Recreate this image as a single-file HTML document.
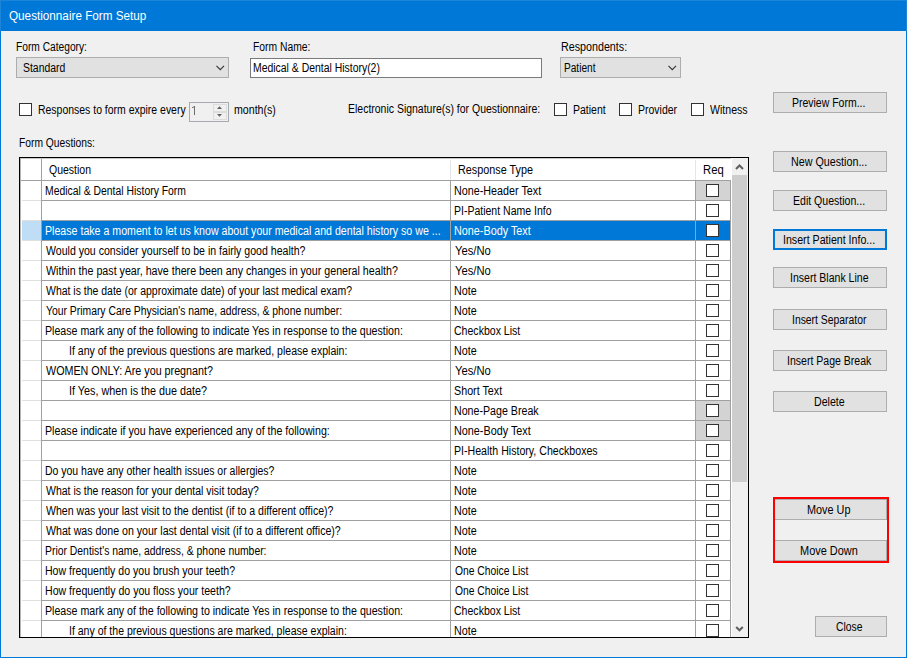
<!DOCTYPE html>
<html><head><meta charset="utf-8"><style>
*{margin:0;padding:0;box-sizing:border-box}
html,body{width:907px;height:658px;overflow:hidden;background:#F0F0F0}
body{position:relative;font-family:"Liberation Sans",sans-serif;font-size:12px;color:#000}
.a{position:absolute}
.t{position:absolute;font-size:12px;line-height:14px;white-space:nowrap;transform-origin:0 0;z-index:5}
.btn{position:absolute;left:773px;width:114px;height:21px;border:1px solid #ADADAD;background:#E1E1E1}
.cb{position:absolute;width:13px;height:13px;border:1px solid #333;background:#fff;z-index:3}
.hl{position:absolute;height:1px;background:#A0A0A0;z-index:2}
.vl{position:absolute;width:1px;background:#A0A0A0;z-index:2}
</style></head><body>

<div class="a" style="left:0;top:0;width:907px;height:31px;background:#0078D7"></div>
<div class="a" style="left:0;top:0;width:1px;height:658px;background:#0078D7"></div>
<div class="a" style="left:906px;top:0;width:1px;height:658px;background:#0078D7"></div>
<div class="a" style="left:0;top:657px;width:907px;height:1px;background:#0078D7"></div>
<div class="a" style="left:0;top:0;width:907px;height:1px;background:#1C85D9"></div>
<div class="a" style="left:0;top:0;width:1px;height:31px;background:#1C85D9"></div>
<div class="a" style="left:906px;top:0;width:1px;height:31px;background:#1C85D9"></div>
<div class="a" style="left:16px;top:57px;width:213px;height:21px;border:1px solid #ADADAD;background:#E1E1E1"></div>
<svg class="a" style="left:215px;top:63px" width="12" height="8" viewBox="0 0 12 8"><path d="M1.5 2.8 L5.25 6.6 L9 2.8" fill="none" stroke="#333" stroke-width="1.1"/></svg>
<div class="a" style="left:250px;top:58px;width:292px;height:20px;border:1px solid #7A7A7A;background:#fff"></div>
<div class="a" style="left:560px;top:57px;width:121px;height:21px;border:1px solid #ADADAD;background:#E1E1E1"></div>
<svg class="a" style="left:667px;top:63px" width="12" height="8" viewBox="0 0 12 8"><path d="M1.5 2.8 L5.25 6.6 L9 2.8" fill="none" stroke="#333" stroke-width="1.1"/></svg>
<div class="cb" style="left:19px;top:103px"></div>
<div class="a" style="left:189px;top:102px;width:40px;height:20px;border:1px solid #A6A9AF;background:#F0F0F0"></div>
<svg class="a" style="left:189px;top:102px;z-index:3" width="12" height="18" viewBox="0 0 12 18"><path d="M5.5 4 V13" stroke="#6D6D6D" stroke-width="1" fill="none"/><path d="M5.3 4.5 L3 5.9" stroke="#6D6D6D" stroke-width="1" fill="none"/></svg>
<div class="a" style="left:213px;top:104px;width:14px;height:8px;background:#F0F0F0;border:1px solid #DCDCDC"></div>
<div class="a" style="left:213px;top:112px;width:14px;height:8px;background:#F0F0F0;border:1px solid #DCDCDC"></div>
<svg class="a" style="left:213px;top:104px" width="14" height="16" viewBox="0 0 14 16"><path d="M4 5 L6.5 2.2 L9 5 Z" fill="#606060"/><path d="M4 10 L6.5 12.8 L9 10 Z" fill="#606060"/></svg>
<div class="cb" style="left:554px;top:103px"></div>
<div class="cb" style="left:619px;top:103px"></div>
<div class="cb" style="left:691px;top:103px"></div>
<div class="btn" style="top:92px;"></div>
<div class="btn" style="top:151px;"></div>
<div class="btn" style="top:190px;"></div>
<div class="btn" style="top:229px;border:2px solid #0078D7"></div>
<div class="btn" style="top:267px;"></div>
<div class="btn" style="top:309px;"></div>
<div class="btn" style="top:350px;"></div>
<div class="btn" style="top:391px;"></div>
<div class="btn" style="top:499px;"></div>
<div class="btn" style="top:540px;"></div>
<div class="a" style="left:773px;top:497px;width:116px;height:66px;border:2px solid #FF0000;z-index:4"></div>
<div class="btn" style="top:616px;left:815px;width:72px"></div>
<div class="a" style="left:19px;top:157px;width:730px;height:481px;border:1px solid #000;background:#fff"></div>
<div class="a" style="left:20px;top:158px;width:711px;height:1px;background:#C8C8C8;z-index:2"></div>
<div class="a" style="left:20px;top:158px;width:1px;height:479px;background:#B4B4B4;z-index:2"></div>
<div class="vl" style="left:41px;top:159px;height:478px"></div>
<div class="a" style="left:450px;top:160px;width:1px;height:20px;background:#E5E5E5"></div>
<div class="a" style="left:695px;top:160px;width:1px;height:20px;background:#E5E5E5"></div>
<div class="hl" style="left:21px;top:180px;width:710px"></div>
<div class="a" style="left:696px;top:181px;width:34px;height:19px;background:#D3D3D3"></div>
<div class="cb" style="left:706px;top:184px;height:13px;"></div>
<div class="hl" style="left:42px;top:200px;width:689px"></div>
<div class="a" style="left:22px;top:200px;width:19px;height:1px;background:#E0E0E0"></div>
<div class="cb" style="left:706px;top:204px;height:13px;"></div>
<div class="hl" style="left:42px;top:220px;width:689px"></div>
<div class="a" style="left:22px;top:220px;width:19px;height:1px;background:#E0E0E0"></div>
<div class="a" style="left:22px;top:221px;width:19px;height:20px;background:#BFDDF5"></div>
<div class="a" style="left:42px;top:221px;width:689px;height:19px;background:#0078D7"></div>
<div class="cb" style="left:706px;top:224px;height:13px;"></div>
<div class="hl" style="left:42px;top:240px;width:689px"></div>
<div class="a" style="left:22px;top:240px;width:19px;height:1px;background:#E0E0E0"></div>
<div class="cb" style="left:706px;top:244px;height:13px;"></div>
<div class="hl" style="left:42px;top:260px;width:689px"></div>
<div class="a" style="left:22px;top:260px;width:19px;height:1px;background:#E0E0E0"></div>
<div class="cb" style="left:706px;top:264px;height:13px;"></div>
<div class="hl" style="left:42px;top:280px;width:689px"></div>
<div class="a" style="left:22px;top:280px;width:19px;height:1px;background:#E0E0E0"></div>
<div class="cb" style="left:706px;top:284px;height:13px;"></div>
<div class="hl" style="left:42px;top:300px;width:689px"></div>
<div class="a" style="left:22px;top:300px;width:19px;height:1px;background:#E0E0E0"></div>
<div class="cb" style="left:706px;top:304px;height:13px;"></div>
<div class="hl" style="left:42px;top:320px;width:689px"></div>
<div class="a" style="left:22px;top:320px;width:19px;height:1px;background:#E0E0E0"></div>
<div class="cb" style="left:706px;top:324px;height:13px;"></div>
<div class="hl" style="left:42px;top:340px;width:689px"></div>
<div class="a" style="left:22px;top:340px;width:19px;height:1px;background:#E0E0E0"></div>
<div class="cb" style="left:706px;top:344px;height:13px;"></div>
<div class="hl" style="left:42px;top:360px;width:689px"></div>
<div class="a" style="left:22px;top:360px;width:19px;height:1px;background:#E0E0E0"></div>
<div class="cb" style="left:706px;top:364px;height:13px;"></div>
<div class="hl" style="left:42px;top:380px;width:689px"></div>
<div class="a" style="left:22px;top:380px;width:19px;height:1px;background:#E0E0E0"></div>
<div class="cb" style="left:706px;top:384px;height:13px;"></div>
<div class="hl" style="left:42px;top:400px;width:689px"></div>
<div class="a" style="left:22px;top:400px;width:19px;height:1px;background:#E0E0E0"></div>
<div class="a" style="left:696px;top:401px;width:34px;height:19px;background:#D3D3D3"></div>
<div class="cb" style="left:706px;top:404px;height:13px;"></div>
<div class="hl" style="left:42px;top:420px;width:689px"></div>
<div class="a" style="left:22px;top:420px;width:19px;height:1px;background:#E0E0E0"></div>
<div class="a" style="left:696px;top:421px;width:34px;height:19px;background:#D3D3D3"></div>
<div class="cb" style="left:706px;top:424px;height:13px;"></div>
<div class="hl" style="left:42px;top:440px;width:689px"></div>
<div class="a" style="left:22px;top:440px;width:19px;height:1px;background:#E0E0E0"></div>
<div class="cb" style="left:706px;top:444px;height:13px;"></div>
<div class="hl" style="left:42px;top:460px;width:689px"></div>
<div class="a" style="left:22px;top:460px;width:19px;height:1px;background:#E0E0E0"></div>
<div class="cb" style="left:706px;top:464px;height:13px;"></div>
<div class="hl" style="left:42px;top:480px;width:689px"></div>
<div class="a" style="left:22px;top:480px;width:19px;height:1px;background:#E0E0E0"></div>
<div class="cb" style="left:706px;top:484px;height:13px;"></div>
<div class="hl" style="left:42px;top:500px;width:689px"></div>
<div class="a" style="left:22px;top:500px;width:19px;height:1px;background:#E0E0E0"></div>
<div class="cb" style="left:706px;top:504px;height:13px;"></div>
<div class="hl" style="left:42px;top:520px;width:689px"></div>
<div class="a" style="left:22px;top:520px;width:19px;height:1px;background:#E0E0E0"></div>
<div class="cb" style="left:706px;top:524px;height:13px;"></div>
<div class="hl" style="left:42px;top:540px;width:689px"></div>
<div class="a" style="left:22px;top:540px;width:19px;height:1px;background:#E0E0E0"></div>
<div class="cb" style="left:706px;top:544px;height:13px;"></div>
<div class="hl" style="left:42px;top:560px;width:689px"></div>
<div class="a" style="left:22px;top:560px;width:19px;height:1px;background:#E0E0E0"></div>
<div class="cb" style="left:706px;top:564px;height:13px;"></div>
<div class="hl" style="left:42px;top:580px;width:689px"></div>
<div class="a" style="left:22px;top:580px;width:19px;height:1px;background:#E0E0E0"></div>
<div class="cb" style="left:706px;top:584px;height:13px;"></div>
<div class="hl" style="left:42px;top:600px;width:689px"></div>
<div class="a" style="left:22px;top:600px;width:19px;height:1px;background:#E0E0E0"></div>
<div class="cb" style="left:706px;top:604px;height:13px;"></div>
<div class="hl" style="left:42px;top:620px;width:689px"></div>
<div class="a" style="left:22px;top:620px;width:19px;height:1px;background:#E0E0E0"></div>
<div class="cb" style="left:706px;top:624px;height:13px;"></div>
<div class="vl" style="left:450px;top:181px;height:456px"></div>
<div class="vl" style="left:695px;top:181px;height:456px"></div>
<div class="vl" style="left:730px;top:181px;height:456px"></div>
<div class="a" style="left:731px;top:158px;width:17px;height:479px;background:#F0F0F0;border-left:1px solid #fff;z-index:2"></div>
<div class="a" style="left:732px;top:175px;width:15px;height:307px;background:#CDCDCD;z-index:3"></div>
<svg class="a" style="left:732px;top:158px;z-index:3" width="15" height="17" viewBox="0 0 15 17"><path d="M4 11 L7.5 7.5 L11 11" fill="none" stroke="#606060" stroke-width="2"/></svg>
<svg class="a" style="left:732px;top:620px;z-index:3" width="15" height="17" viewBox="0 0 15 17"><path d="M4.2 7 L7.5 10.3 L10.8 7" fill="none" stroke="#606060" stroke-width="2"/></svg>
<div class="t" style="left:9.40px;top:9px;color:#fff;transform:scaleX(0.9757)">Questionnaire Form Setup</div>
<div class="t" style="left:15.55px;top:40px;color:#000;transform:scaleX(0.8506)">Form Category:</div>
<div class="t" style="left:252.94px;top:40px;color:#000;transform:scaleX(0.8600)">Form Name:</div>
<div class="t" style="left:561.31px;top:40px;color:#000;transform:scaleX(0.8931)">Respondents:</div>
<div class="t" style="left:23.33px;top:61px;color:#000;transform:scaleX(0.8681)">Standard</div>
<div class="t" style="left:252.93px;top:61px;color:#000;transform:scaleX(0.8687)">Medical &amp; Dental History(2)</div>
<div class="t" style="left:563.76px;top:61px;color:#000;transform:scaleX(0.8417)">Patient</div>
<div class="t" style="left:37.73px;top:103px;color:#000;transform:scaleX(0.8716)">Responses to form expire every</div>
<div class="t" style="left:233.62px;top:103px;color:#000;transform:scaleX(0.8848)">month(s)</div>
<div class="t" style="left:347.93px;top:102px;color:#000;transform:scaleX(0.8729)">Electronic Signature(s) for Questionnaire:</div>
<div class="t" style="left:572.62px;top:103px;color:#000;transform:scaleX(0.8750)">Patient</div>
<div class="t" style="left:637.52px;top:103px;color:#000;transform:scaleX(0.8750)">Provider</div>
<div class="t" style="left:710.20px;top:103px;color:#000;transform:scaleX(0.8810)">Witness</div>
<div class="t" style="left:18.74px;top:136px;color:#000;transform:scaleX(0.8563)">Form Questions:</div>
<div class="t" style="left:792.43px;top:96px;color:#000;transform:scaleX(0.8732)">Preview Form...</div>
<div class="t" style="left:790.81px;top:155px;color:#000;transform:scaleX(0.8940)">New Question...</div>
<div class="t" style="left:793.12px;top:194px;color:#000;transform:scaleX(0.8787)">Edit Question...</div>
<div class="t" style="left:783.11px;top:233px;color:#000;transform:scaleX(0.8863)">Insert Patient Info...</div>
<div class="t" style="left:790.02px;top:271px;color:#000;transform:scaleX(0.8784)">Insert Blank Line</div>
<div class="t" style="left:792.14px;top:313px;color:#000;transform:scaleX(0.8647)">Insert Separator</div>
<div class="t" style="left:786.52px;top:354px;color:#000;transform:scaleX(0.8779)">Insert Page Break</div>
<div class="t" style="left:813.72px;top:395px;color:#000;transform:scaleX(0.8848)">Delete</div>
<div class="t" style="left:806.70px;top:503px;color:#000;transform:scaleX(0.9043)">Move Up</div>
<div class="t" style="left:799.69px;top:544px;color:#000;transform:scaleX(0.9129)">Move Down</div>
<div class="t" style="left:836.04px;top:620px;color:#000;transform:scaleX(0.8621)">Close</div>
<div class="t" style="left:48.90px;top:163px;color:#000;transform:scaleX(0.8745)">Question</div>
<div class="t" style="left:457.50px;top:163px;color:#000;transform:scaleX(0.9012)">Response Type</div>
<div class="t" style="left:702.66px;top:163px;color:#000;transform:scaleX(0.9400)">Req</div>
<div class="t" style="left:44.63px;top:184px;color:#000;transform:scaleX(0.8665)">Medical &amp; Dental History Form</div>
<div class="t" style="left:453.70px;top:184px;color:#000;transform:scaleX(0.8969)">None-Header Text</div>
<div class="t" style="left:453.72px;top:204px;color:#000;transform:scaleX(0.8755)">PI-Patient Name Info</div>
<div class="t" style="left:44.61px;top:224px;color:#fff;transform:scaleX(0.8852)">Please take a moment to let us know about your medical and dental history so we ...</div>
<div class="t" style="left:453.70px;top:224px;color:#fff;transform:scaleX(0.9012)">None-Body Text</div>
<div class="t" style="left:45.50px;top:244px;color:#000;transform:scaleX(0.8806)">Would you consider yourself to be in fairly good health?</div>
<div class="t" style="left:454.60px;top:244px;color:#000;transform:scaleX(0.9342)">Yes/No</div>
<div class="t" style="left:45.50px;top:264px;color:#000;transform:scaleX(0.8894)">Within the past year, have there been any changes in your general health?</div>
<div class="t" style="left:454.60px;top:264px;color:#000;transform:scaleX(0.9342)">Yes/No</div>
<div class="t" style="left:45.50px;top:284px;color:#000;transform:scaleX(0.8721)">What is the date (or approximate date) of your last medical exam?</div>
<div class="t" style="left:453.70px;top:284px;color:#000;transform:scaleX(0.8958)">Note</div>
<div class="t" style="left:45.50px;top:304px;color:#000;transform:scaleX(0.8640)">Your Primary Care Physician's name, address, &amp; phone number:</div>
<div class="t" style="left:453.70px;top:304px;color:#000;transform:scaleX(0.8958)">Note</div>
<div class="t" style="left:44.61px;top:324px;color:#000;transform:scaleX(0.8853)">Please mark any of the following to indicate Yes in response to the question:</div>
<div class="t" style="left:453.72px;top:324px;color:#000;transform:scaleX(0.8797)">Checkbox List</div>
<div class="t" style="left:69.12px;top:344px;color:#000;transform:scaleX(0.8787)">If any of the previous questions are marked, please explain:</div>
<div class="t" style="left:453.70px;top:344px;color:#000;transform:scaleX(0.8958)">Note</div>
<div class="t" style="left:45.50px;top:364px;color:#000;transform:scaleX(0.8952)">WOMEN ONLY: Are you pregnant?</div>
<div class="t" style="left:454.60px;top:364px;color:#000;transform:scaleX(0.9342)">Yes/No</div>
<div class="t" style="left:69.10px;top:384px;color:#000;transform:scaleX(0.9000)">If Yes, when is the due date?</div>
<div class="t" style="left:453.71px;top:384px;color:#000;transform:scaleX(0.8943)">Short Text</div>
<div class="t" style="left:453.71px;top:404px;color:#000;transform:scaleX(0.8872)">None-Page Break</div>
<div class="t" style="left:44.61px;top:424px;color:#000;transform:scaleX(0.8875)">Please indicate if you have experienced any of the following:</div>
<div class="t" style="left:453.70px;top:424px;color:#000;transform:scaleX(0.9012)">None-Body Text</div>
<div class="t" style="left:453.72px;top:444px;color:#000;transform:scaleX(0.8839)">PI-Health History, Checkboxes</div>
<div class="t" style="left:44.63px;top:464px;color:#000;transform:scaleX(0.8729)">Do you have any other health issues or allergies?</div>
<div class="t" style="left:453.70px;top:464px;color:#000;transform:scaleX(0.8958)">Note</div>
<div class="t" style="left:45.50px;top:484px;color:#000;transform:scaleX(0.8737)">What is the reason for your dental visit today?</div>
<div class="t" style="left:453.70px;top:484px;color:#000;transform:scaleX(0.8958)">Note</div>
<div class="t" style="left:45.50px;top:504px;color:#000;transform:scaleX(0.8807)">When was your last visit to the dentist (if to a different office)?</div>
<div class="t" style="left:453.70px;top:504px;color:#000;transform:scaleX(0.8958)">Note</div>
<div class="t" style="left:45.50px;top:524px;color:#000;transform:scaleX(0.8832)">What was done on your last dental visit (if to a different office)?</div>
<div class="t" style="left:453.70px;top:524px;color:#000;transform:scaleX(0.8958)">Note</div>
<div class="t" style="left:44.63px;top:544px;color:#000;transform:scaleX(0.8661)">Prior Dentist's name, address, &amp; phone number:</div>
<div class="t" style="left:453.70px;top:544px;color:#000;transform:scaleX(0.8958)">Note</div>
<div class="t" style="left:44.62px;top:564px;color:#000;transform:scaleX(0.8795)">How frequently do you brush your teeth?</div>
<div class="t" style="left:454.60px;top:564px;color:#000;transform:scaleX(0.8588)">One Choice List</div>
<div class="t" style="left:44.62px;top:584px;color:#000;transform:scaleX(0.8809)">How frequently do you floss your teeth?</div>
<div class="t" style="left:454.60px;top:584px;color:#000;transform:scaleX(0.8588)">One Choice List</div>
<div class="t" style="left:44.61px;top:604px;color:#000;transform:scaleX(0.8856)">Please mark any of the following to indicate Yes in response to the question:</div>
<div class="t" style="left:453.72px;top:604px;color:#000;transform:scaleX(0.8797)">Checkbox List</div>
<div class="t" style="left:69.12px;top:624px;color:#000;transform:scaleX(0.8768)">If any of the previous questions are marked, please explain:</div>
<div class="t" style="left:453.70px;top:624px;color:#000;transform:scaleX(0.8958)">Note</div>
<div class="a" style="left:19px;top:637px;width:730px;height:1px;background:#000;z-index:6"></div>
<div class="a" style="left:19px;top:638px;width:730px;height:4px;background:#F0F0F0;z-index:6"></div>
</body></html>
